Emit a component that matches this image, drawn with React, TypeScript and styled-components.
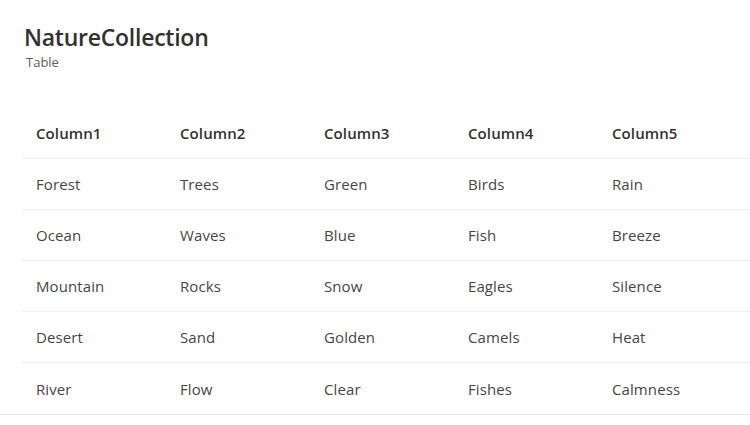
import React from "react";
import styled, { createGlobalStyle } from "styled-components";

const Global = createGlobalStyle`
  html, body { margin: 0; padding: 0; background: #ffffff; }
  body { font-family: "Open Sans", "Noto Sans", sans-serif; color: #323130; }
`;

const Page = styled.div`
  width: 750px;
  height: 425px;
  overflow: hidden;
  display: flex;
  flex-direction: column;
`;

const Header = styled.header`
  padding: 21px 24px 0 24px;
  display: flex;
  flex-direction: column;
`;

const Title = styled.h1`
  margin: 0;
  font-size: 23px;
  font-weight: 600;
  line-height: 32px;
  color: #323130;
  letter-spacing: -0.25px;
`;

const Subtitle = styled.div`
  font-size: 13px;
  line-height: 16px;
  color: #605e5c;
  margin-left: 2px;
  margin-top: 1px;
`;

const TableWrap = styled.div`
  margin-top: 37px;
  border-bottom: 1px solid #edebe9;
`;

const Table = styled.div`
  margin-left: 21px;
  display: flex;
  flex-direction: column;
`;

const Row = styled.div<{ $head?: boolean; $last?: boolean }>`
  display: grid;
  grid-template-columns: repeat(5, 144px) 1fr;
  height: ${(p) => (p.$head ? 52 : 51)}px;
  border-bottom: ${(p) => (p.$last ? "none" : "1px solid #f3f2f1")};
  align-items: center;
  box-sizing: border-box;
`;

const Cell = styled.div<{ $head?: boolean }>`
  padding-left: 15px;
  font-size: 15px;
  font-weight: ${(p) => (p.$head ? 600 : 400)};
  color: ${(p) => (p.$head ? "#323130" : "#484644")};
  letter-spacing: 0.1px;
  white-space: nowrap;
`;

const columns = ["Column1", "Column2", "Column3", "Column4", "Column5"];
const rows = [
  ["Forest", "Trees", "Green", "Birds", "Rain"],
  ["Ocean", "Waves", "Blue", "Fish", "Breeze"],
  ["Mountain", "Rocks", "Snow", "Eagles", "Silence"],
  ["Desert", "Sand", "Golden", "Camels", "Heat"],
  ["River", "Flow", "Clear", "Fishes", "Calmness"],
];

export default function App() {
  return (
    <Page>
      <Global />
      <Header>
        <Title>NatureCollection</Title>
        <Subtitle>Table</Subtitle>
      </Header>
      <TableWrap>
        <Table>
          <Row $head>
            {columns.map((c) => (
              <Cell $head key={c}>{c}</Cell>
            ))}
            <div />
          </Row>
          {rows.map((r, i) => (
            <Row key={i} $last={i === rows.length - 1}>
              {r.map((v) => (
                <Cell key={v}>{v}</Cell>
              ))}
              <div />
            </Row>
          ))}
        </Table>
      </TableWrap>
    </Page>
  );
}
